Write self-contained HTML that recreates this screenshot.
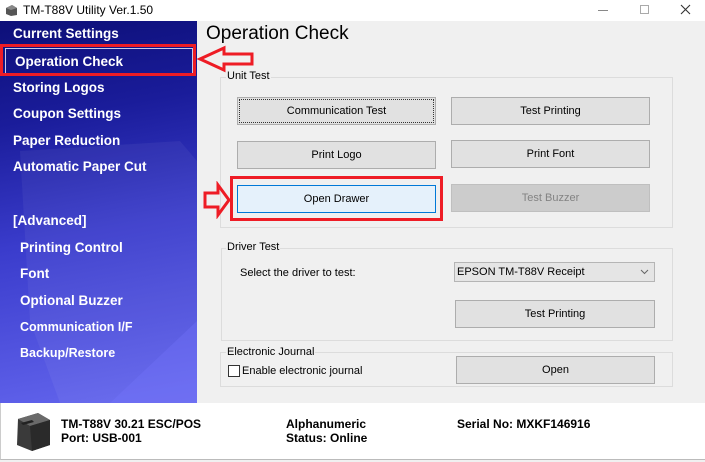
<!DOCTYPE html>
<html><head><meta charset="utf-8"><style>
*{margin:0;padding:0;box-sizing:border-box}
body{width:705px;height:462px;overflow:hidden;background:#f0f0f0;font-family:"Liberation Sans",sans-serif;position:relative}
.abs{position:absolute}
.title{left:0;top:0;width:705px;height:21px;background:#fff;font-size:12px;color:#000}
.side{left:0;top:21px;width:197px;height:382px;background:linear-gradient(170deg,#0d0f78 0%,#1a1c9a 25%,#3a3ccc 55%,#6466ee 100%);overflow:hidden}
.side .it{position:absolute;color:#fff;font-weight:bold;font-size:13.5px;white-space:nowrap}
.side .sm{font-size:12.5px}
.btn{position:absolute;background:#e1e1e1;border:1px solid #adadad;font-size:11px;color:#000;text-align:center;display:flex;align-items:center;justify-content:center}
.grp{position:absolute;border:1px solid #dcdcdc}
.lbl{position:absolute;background:#f0f0f0;font-size:11px;padding:0 1px;color:#000}
.bot{left:0;top:403px;width:705px;height:57px;background:#fff;border-bottom:1px solid #bbb;border-left:1px solid #ccc}
.bt{position:absolute;font-family:"Liberation Sans Narrow","Liberation Sans",sans-serif;font-weight:bold;font-size:12px;line-height:14px;color:#000}
.red{position:absolute;border:3px solid #ee1c25}
</style></head><body>
<div class="abs title">
 <svg class="abs" style="left:4px;top:3px" width="14" height="14"><path d="M2 5 L8 2 L13 5 L13 12 L7 13 L2 11Z" fill="#555"/><path d="M2 5 L8 2 L13 5 L7 7Z" fill="#888"/></svg>
 <span class="abs" style="left:23px;top:3px">TM-T88V Utility Ver.1.50</span>
 <div class="abs" style="left:598px;top:10px;width:10px;height:1px;background:#888"></div>
 <div class="abs" style="left:640px;top:5px;width:9px;height:9px;border:1px solid #aaa"></div>
 <svg class="abs" style="left:680px;top:4px" width="11" height="11"><path d="M1 1L10 10M10 1L1 10" stroke="#333" stroke-width="1.1"/></svg>
</div>
<div class="abs side">
 <svg class="abs" style="left:0;top:100px" width="197" height="282"><path d="M20 30 L180 20 L197 40 L197 282 L60 282 L30 200Z" fill="rgba(255,255,255,0.05)"/><path d="M110 282 L197 200 L197 282Z" fill="rgba(120,120,255,0.3)"/></svg>
 <div class="it" style="left:13px;top:5px">Current Settings</div>
 <div class="it" style="left:15px;top:33px">Operation Check</div>
 <div class="it" style="left:13px;top:59px">Storing Logos</div>
 <div class="it" style="left:13px;top:85px">Coupon Settings</div>
 <div class="it" style="left:13px;top:112px">Paper Reduction</div>
 <div class="it" style="left:13px;top:138px">Automatic Paper Cut</div>
 <div class="it" style="left:13px;top:192px">[Advanced]</div>
 <div class="it" style="left:20px;top:219px">Printing Control</div>
 <div class="it" style="left:20px;top:245px">Font</div>
 <div class="it" style="left:20px;top:272px">Optional Buzzer</div>
 <div class="it sm" style="left:20px;top:299px">Communication I/F</div>
 <div class="it sm" style="left:20px;top:325px">Backup/Restore</div>
 <div class="abs" style="left:5px;top:27px;width:188px;height:26px;border:1px solid #c8c8e8;"></div>
</div>
<div class="red" style="left:0;top:44px;width:196px;height:32px"></div>
<svg class="abs" style="left:196px;top:45px" width="62" height="28"><path d="M4 14 L28 3 L28 9 L56 9 L56 19 L28 19 L28 25Z" fill="none" stroke="#ee1c25" stroke-width="3"/></svg>
<div class="abs" style="left:206px;top:23px;font-size:19px;color:#000">Operation Check</div>

<div class="grp" style="left:220px;top:77px;width:453px;height:151px"></div>
<div class="lbl" style="left:226px;top:70px">Unit Test</div>
<div class="btn" style="left:237px;top:97px;width:199px;height:28px;outline:1px dotted #333;outline-offset:-3px">Communication Test</div>
<div class="btn" style="left:451px;top:97px;width:199px;height:28px">Test Printing</div>
<div class="btn" style="left:237px;top:141px;width:199px;height:28px">Print Logo</div>
<div class="btn" style="left:451px;top:140px;width:199px;height:28px">Print Font</div>
<div class="btn" style="left:237px;top:185px;width:199px;height:28px;background:#e5f1fb;border-color:#0078d7">Open Drawer</div>
<div class="btn" style="left:451px;top:184px;width:199px;height:28px;background:#cccccc;border-color:#bfbfbf;color:#838383">Test Buzzer</div>
<div class="red" style="left:230px;top:176px;width:213px;height:45px"></div>
<svg class="abs" style="left:202px;top:181px" width="30" height="38"><path d="M3 12 L16 12 L16 4 L27 19 L16 34 L16 26 L3 26Z" fill="none" stroke="#ee1c25" stroke-width="3"/></svg>

<div class="grp" style="left:221px;top:248px;width:452px;height:93px"></div>
<div class="lbl" style="left:226px;top:241px">Driver Test</div>
<div class="abs" style="left:240px;top:267px;font-size:11px">Select the driver to test:</div>
<div class="abs" style="left:454px;top:262px;width:201px;height:20px;background:#e5e5e5;border:1px solid #b5b5b5;font-size:11px;padding:3px 2px">EPSON TM-T88V Receipt
 <svg class="abs" style="right:5px;top:6px" width="9" height="6"><path d="M1 1L4.5 4.5L8 1" stroke="#666" fill="none"/></svg></div>
<div class="btn" style="left:455px;top:300px;width:200px;height:28px">Test Printing</div>

<div class="grp" style="left:220px;top:352px;width:453px;height:35px"></div>
<div class="lbl" style="left:226px;top:346px">Electronic Journal</div>
<div class="abs" style="left:228px;top:365px;width:12px;height:12px;border:1px solid #333;background:#fff"></div>
<div class="abs" style="left:242px;top:365px;font-size:11px">Enable electronic journal</div>
<div class="btn" style="left:456px;top:356px;width:199px;height:28px">Open</div>

<div class="abs bot">
 <svg class="abs" style="left:11px;top:8px" width="44" height="42"><path d="M6 8 L26 2 L38 9 L38 34 L20 40 L5 34Z" fill="#3a3a3a"/><path d="M6 8 L26 2 L38 9 L18 15Z" fill="#6a6a6a"/><path d="M18 15 L38 9 L38 34 L20 40Z" fill="#2a2a2a"/><path d="M9 12 L20 9 L22 11 L11 14Z" fill="#222"/></svg>
 <div class="bt" style="left:60px;top:14px">TM-T88V 30.21 ESC/POS<br>Port: USB-001</div>
 <div class="bt" style="left:285px;top:14px">Alphanumeric<br>Status: Online</div>
 <div class="bt" style="left:456px;top:14px">Serial No: MXKF146916</div>
</div>
</body></html>
